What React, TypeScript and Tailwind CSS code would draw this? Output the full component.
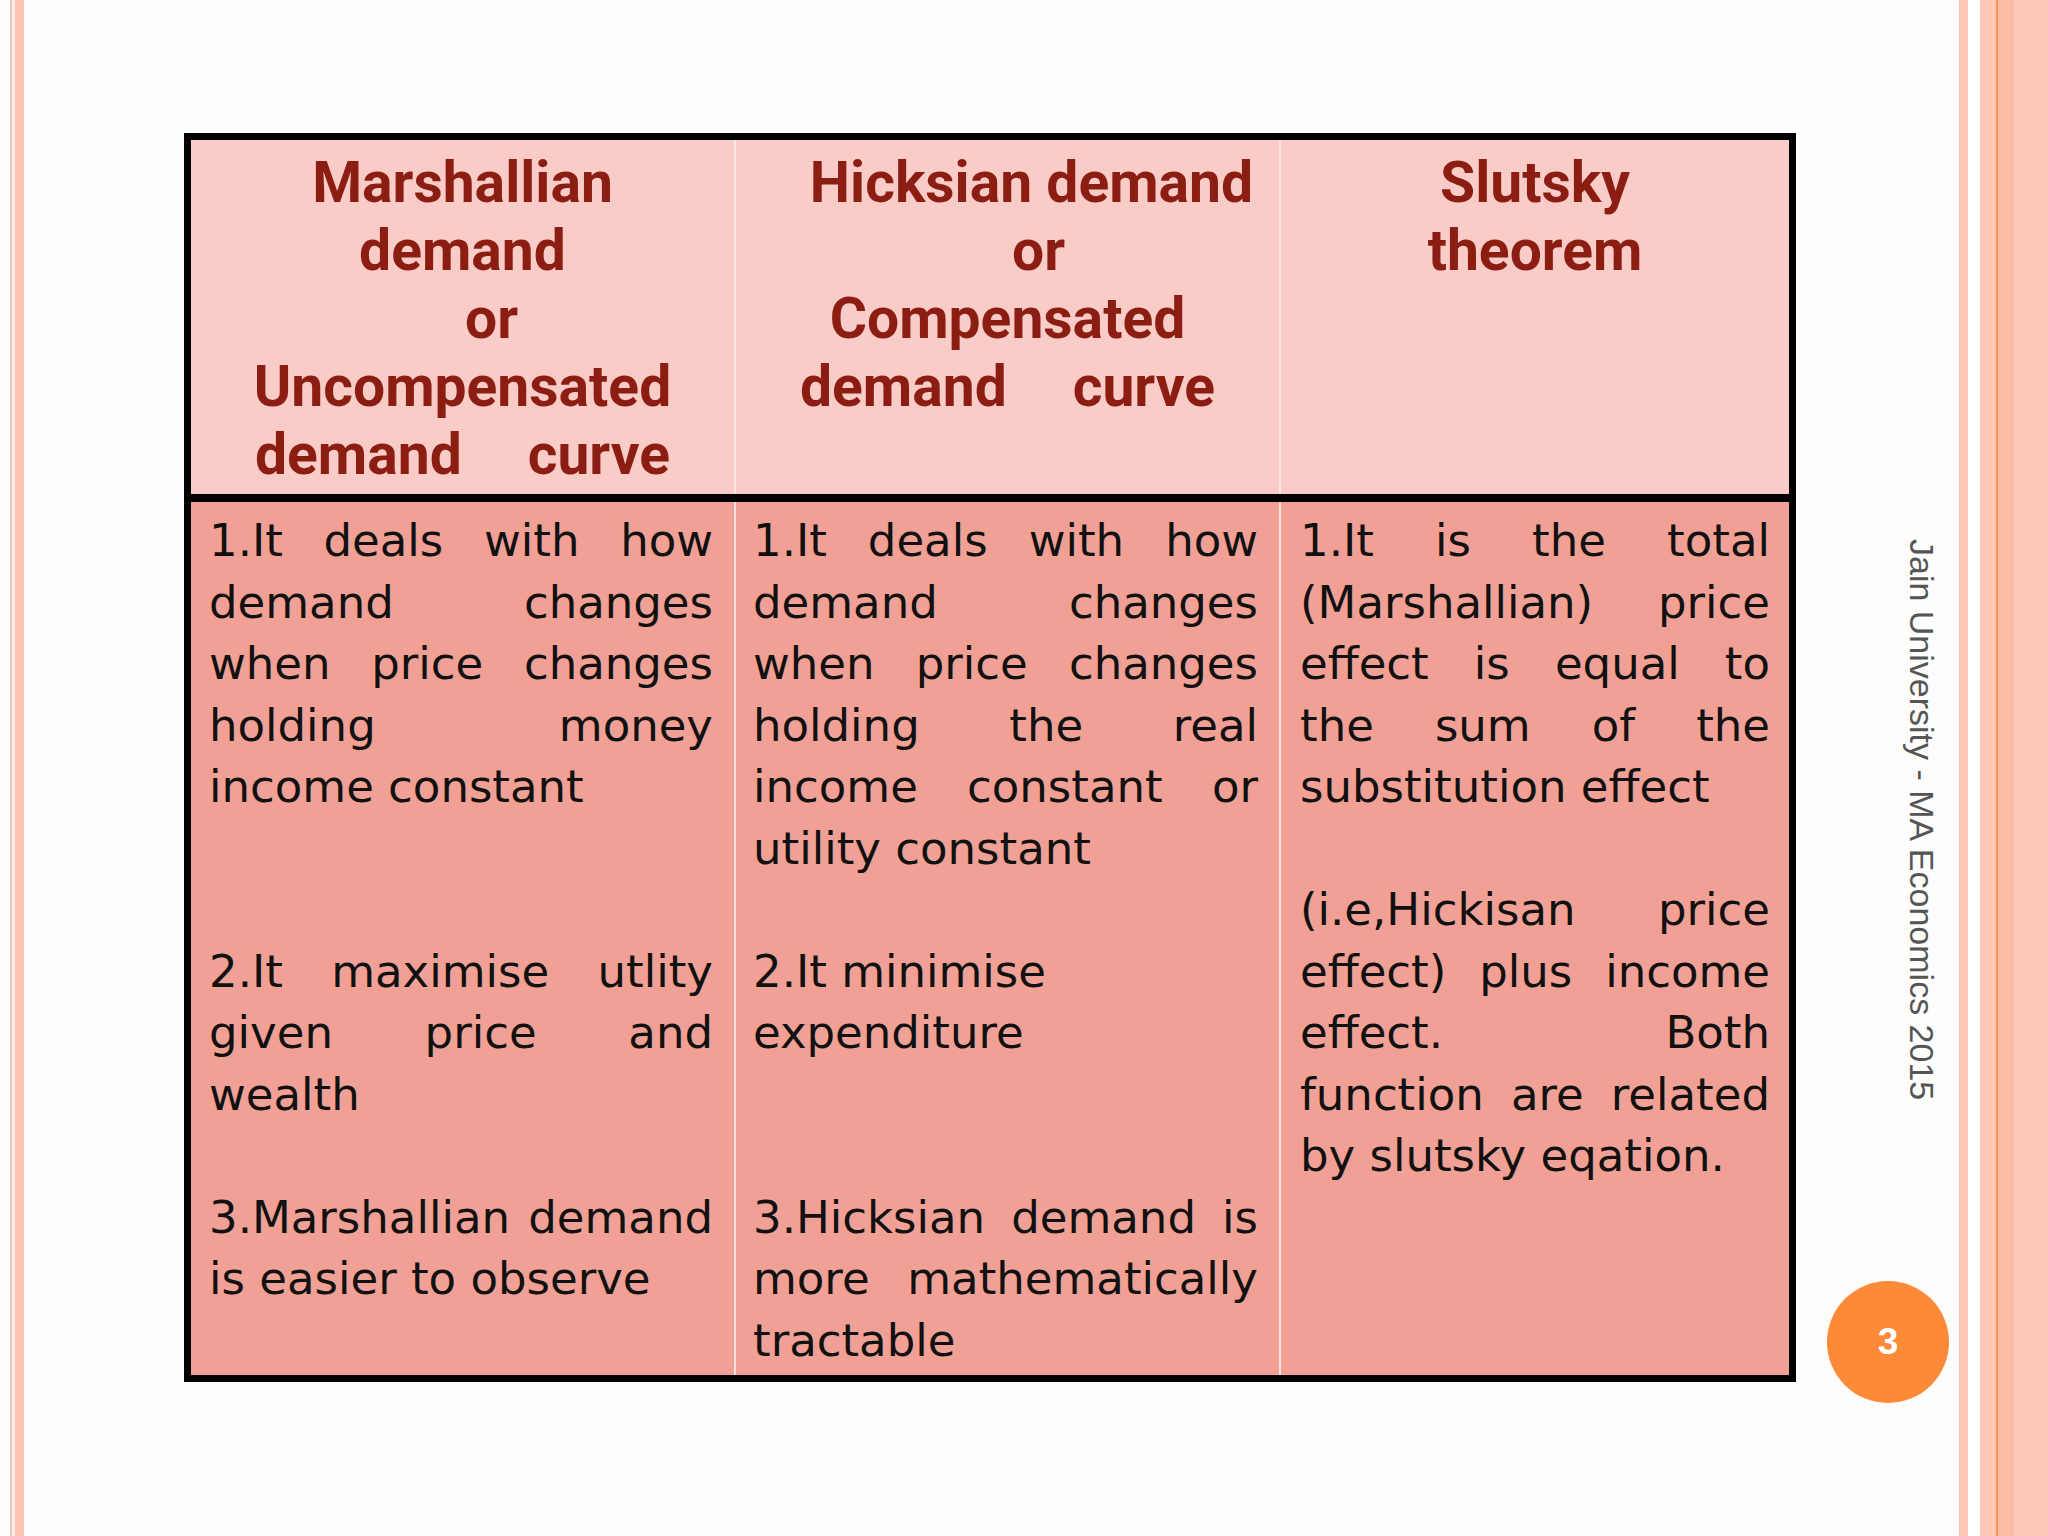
import * as React from "react";

type Line = { text: string; justify?: boolean } | null;

// body lines per column, null = empty line
const bodyColumns: Line[][] = [
  [
    { text: "1.It deals with how", justify: true },
    { text: "demand changes", justify: true },
    { text: "when price changes", justify: true },
    { text: "holding money", justify: true },
    { text: "income constant" },
    null,
    null,
    { text: "2.It maximise utlity", justify: true },
    { text: "given price and", justify: true },
    { text: "wealth" },
    null,
    { text: "3.Marshallian demand", justify: true },
    { text: "is easier to observe" },
  ],
  [
    { text: "1.It deals with how", justify: true },
    { text: "demand changes", justify: true },
    { text: "when price changes", justify: true },
    { text: "holding the real", justify: true },
    { text: "income constant or", justify: true },
    { text: "utility constant" },
    null,
    { text: "2.It minimise" },
    { text: "expenditure" },
    null,
    null,
    { text: "3.Hicksian demand is", justify: true },
    { text: "more  mathematically", justify: true },
    { text: "tractable" },
  ],
  [
    { text: "1.It is the total", justify: true },
    { text: "(Marshallian) price", justify: true },
    { text: "effect is equal to", justify: true },
    { text: "the sum of the", justify: true },
    { text: "substitution effect" },
    null,
    { text: "(i.e,Hickisan price", justify: true },
    { text: "effect) plus income", justify: true },
    { text: "effect. Both", justify: true },
    { text: "function are related", justify: true },
    { text: "by slutsky eqation." },
  ],
];

function BodyCell({ lines, className }: { lines: Line[]; className: string }) {
  return (
    <div className={className}>
      {lines.map((line, i) =>
        line === null ? (
          <div key={i} className="h-[61.5px]" />
        ) : (
          <div
            key={i}
            className={
              line.justify
                ? "h-[61.5px] whitespace-nowrap text-justify [text-align-last:justify]"
                : "h-[61.5px] whitespace-pre"
            }
          >
            {line.text}
          </div>
        )
      )}
    </div>
  );
}

function SplitLine({ left, right }: { left: string; right: string }) {
  return (
    <div className="flex justify-center gap-[66px]">
      <span>{left}</span>
      <span>{right}</span>
    </div>
  );
}

export default function App() {
  return (
    <div className="flex w-[2048px] h-[1536px] bg-[#fdfdfb] overflow-hidden">
      {/* left edge stripes */}
      <div className="w-[10px]" />
      <div className="w-[2px] bg-[#f5c0b5]" />
      <div className="w-[3px] bg-[#fdece7]" />
      <div className="w-[9px] bg-[#fdc4b1]" />

      <div className="flex w-[1935px]">
        <div className="ml-[160px] mt-[133px] w-[1612px] h-[1249px] border-[7px] border-black">
          {/* header row */}
          <div className="grid grid-cols-[543px_545px_510px] h-[362px] bg-[#f9ccc7] border-b-8 border-black font-['Roboto',sans-serif] font-bold text-[57px] leading-[68px] text-[#8c1d12]">
            <div className="pt-[9px] text-center">
              <div>Marshallian</div>
              <div>demand</div>
              <div className="pl-[58px]">or</div>
              <div>Uncompensated</div>
              <SplitLine left="demand" right="curve" />
            </div>
            <div className="pt-[9px] text-center border-l-2 border-[#fce6e2]">
              <div className="pl-[48px]">Hicksian demand</div>
              <div className="pl-[62px]">or</div>
              <div>Compensated</div>
              <SplitLine left="demand" right="curve" />
            </div>
            <div className="pt-[9px] text-center border-l-2 border-[#fce6e2]">
              <div>Slutsky</div>
              <div>theorem</div>
            </div>
          </div>

          {/* body row */}
          <div className="grid grid-cols-[543px_545px_510px] h-[873px] bg-[#f0a095] font-['DejaVu_Sans',sans-serif] text-[45px] leading-[61.5px] text-[#111111]">
            <BodyCell lines={bodyColumns[0]} className="pt-[8px] pl-[18px] pr-[21px]" />
            <BodyCell lines={bodyColumns[1]} className="pt-[8px] pl-[17px] pr-[21px] border-l-2 border-[#fbe0db]" />
            <BodyCell lines={bodyColumns[2]} className="pt-[8px] pl-[19px] pr-[19px] border-l-2 border-[#fbe0db]" />
          </div>
        </div>

        {/* footer column */}
        <div className="w-[163px] flex flex-col items-start pt-[539px]">
          <div className="ml-[109px] w-[34px] h-[562px] [writing-mode:vertical-rl] whitespace-nowrap font-['Liberation_Sans',sans-serif] text-[34px] leading-[34px] text-[#555555]">
            Jain University - MA Economics 2015
          </div>
          <div className="mt-[180px] ml-[31px] w-[122px] h-[122px] rounded-full bg-[#fd8a38] flex items-center justify-center font-['Liberation_Sans',sans-serif] font-bold text-[37px] text-white">
            3
          </div>
        </div>
      </div>

      {/* right edge stripes */}
      <div className="w-[9px] bg-[#fdc6b4]" />
      <div className="w-[12px] bg-white" />
      <div className="w-[16px] bg-[#fec6b5]" />
      <div className="w-[2px] bg-[#f59052]" />
      <div className="w-[16px] bg-[#fdbca6]" />
      <div className="flex-1 bg-[#fec8b8]" />
    </div>
  );
}
